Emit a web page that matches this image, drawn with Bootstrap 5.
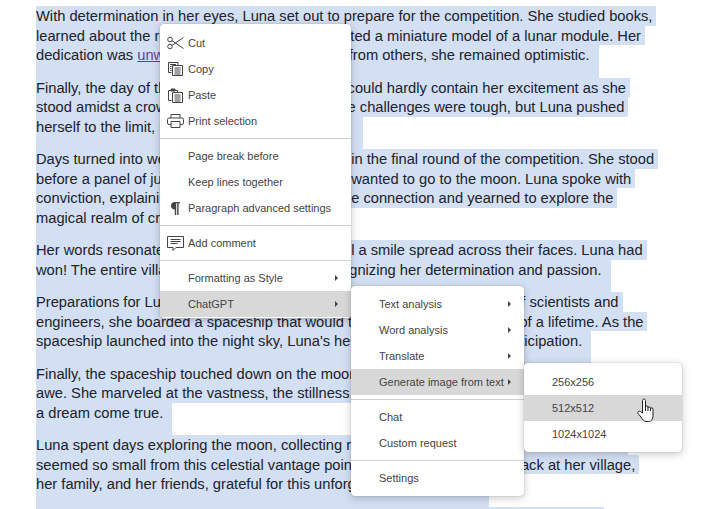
<!DOCTYPE html>
<html lang="en">
<head>
    <meta charset="UTF-8">
    <meta name="viewport" content="width=device-width, initial-scale=1.0">
    <title>Luna story</title>
    <link href="https://cdn.jsdelivr.net/npm/bootstrap@5.3.3/dist/css/bootstrap.min.css" rel="stylesheet" crossorigin="anonymous">
    <style>
        html, body { height: 100%; overflow: hidden; background: #fff; }
        .doc-page { padding: 6px 0 0 36px; font-family: "Liberation Sans", Arial, sans-serif; font-size: 14.7px; line-height: 17.5px; color: #20222c; }
        .doc-para { margin: 0; }
        .sel-line { display: block; width: fit-content; white-space: nowrap; padding: 2px 4px 0 0; background: #d3dff3; }
        .sel-line.para-end { padding-right: 9px; padding-bottom: 13px; }
        .sel-tail { width: 568px; height: 20px; padding: 0; }
        .doc-link { color: #6d3f8c; text-decoration: underline; }

        .ctx-menu { font-family: "Liberation Sans", Arial, sans-serif; font-size: 11px; color: #444; background: #fff; border: 0; border-radius: 4px; min-width: 0; margin: 0; padding: 5px 0; box-shadow: 0 0 1px rgba(0, 0, 0, .45), 0 2px 9px rgba(0, 0, 0, .22); overflow: hidden; }
        .menu-main { top: 24px; left: 160px; width: 191px; padding: 6px 0 1px; z-index: 10; }
        .menu-chat { top: 286px; left: 351px; width: 173px; z-index: 11; }
        .menu-size { top: 363px; left: 524px; width: 158px; padding: 6px 0 5px; z-index: 12; }
        .ctx-row { height: 26px; padding: 0; color: #444; }
        .ctx-row.row-hot { background: #d8d8d8; color: #444; }
        .ctx-slot { flex: 0 0 28px; display: flex; align-items: center; justify-content: center; padding-left: 2px; }
        .ctx-arrow { margin-left: auto; margin-right: 13px; border-left: 3px solid #444; border-top: 3px solid transparent; border-bottom: 3px solid transparent; }
        .ctx-menu .dropdown-divider { margin: 4px 0; border-top: 1px solid #d0d0d0; opacity: 1; }
        .ico { fill: none; stroke: #444; stroke-width: 1; display: block; }
        .ico-solid { fill: #444; display: block; }
        .hand-cursor { position: absolute; left: 637px; top: 398px; z-index: 20; }
    </style>
</head>
<body>
<div class="doc-page">
    <p class="doc-para">
        <span class="sel-line">With determination in her eyes, Luna set out to prepare for the competition. She studied books,</span>
        <span class="sel-line">learned about the rocket tech and even constructed a miniature model of a lunar module. Her</span>
        <span class="sel-line para-end">dedication was <span class="doc-link">unwavering</span>, and despite doubts from others, she remained optimistic.</span>
    </p>
    <p class="doc-para">
        <span class="sel-line">Finally, the day of the competition arrived. Luna could hardly contain her excitement as she</span>
        <span class="sel-line">stood amidst a crowd of hopeful contestants. The challenges were tough, but Luna pushed</span>
        <span class="sel-line para-end">herself to the limit, never once losing her dream.&nbsp;</span>
    </p>
    <p class="doc-para">
        <span class="sel-line">Days turned into weeks, and Luna found herself in the final round of the competition. She stood</span>
        <span class="sel-line">before a panel of judges and explained why she wanted to go to the moon. Luna spoke with</span>
        <span class="sel-line">conviction, explaining how she felt a deep, unique connection and yearned to explore the</span>
        <span class="sel-line para-end">magical realm of craters and stars.</span>
    </p>
    <p class="doc-para">
        <span class="sel-line">Her words resonated with the judges, and overall a smile spread across their faces. Luna had</span>
        <span class="sel-line para-end">won! The entire village erupted into cheers, recognizing her determination and passion.</span>
    </p>
    <p class="doc-para">
        <span class="sel-line">Preparations for Luna's journey up to the moon began soon. With a team of scientists and</span>
        <span class="sel-line">engineers, she boarded a spaceship that would take her on the adventure of a lifetime. As the</span>
        <span class="sel-line para-end">spaceship launched into the night sky, Luna's heart was racing with raw anticipation.</span>
    </p>
    <p class="doc-para">
        <span class="sel-line">Finally, the spaceship touched down on the moon's dusty surface. Luna stepped out in</span>
        <span class="sel-line">awe. She marveled at the vastness, the stillness, and the beauty of it all. It was truly</span>
        <span class="sel-line para-end">a dream come true.</span>
    </p>
    <p class="doc-para">
        <span class="sel-line">Luna spent days exploring the moon, collecting rocks and samples as she went. The Earth</span>
        <span class="sel-line">seemed so small from this celestial vantage point and she always looked back at her village,</span>
        <span class="sel-line para-end">her family, and her friends, grateful for this unforgettable experience.</span>
    </p>
    <p class="doc-para">
        <span class="sel-line sel-tail"></span>
    </p>
</div>

<!-- Main context menu -->
<div class="dropdown-menu show ctx-menu menu-main">
    <div class="dropdown-item ctx-row d-flex align-items-center">
        <span class="ctx-slot">
            <svg class="ico" width="17" height="14" viewBox="0 0 17 14"><circle cx="3" cy="3.5" r="2.3"/><circle cx="3" cy="10.5" r="2.3"/><path d="M5 4.6 16.5 12.5M5 9.4 16.5 1.5"/></svg>
        </span>Cut
    </div>
    <div class="dropdown-item ctx-row d-flex align-items-center">
        <span class="ctx-slot">
            <svg class="ico" width="15" height="14" viewBox="0 0 15 14"><path d="M3.5 10.5H.5V.5H10V3.5"/><path d="M2 2.5H8M2 4.5H3.5M2 6.5H3.5M2 8.5H3.5"/><path d="M4.5 3.5H14.5V13.5H4.5Z"/><path d="M6.5 6H12.5M6.5 8H12.5M6.5 10H12.5M6.5 12H12.5"/></svg>
        </span>Copy
    </div>
    <div class="dropdown-item ctx-row d-flex align-items-center">
        <span class="ctx-slot">
            <svg class="ico" width="15" height="15" viewBox="0 0 15 15"><path d="M3.5 12.5H.5V2.5H9.5V4.5"/><path d="M3 1H7V3H3Z" fill="#444"/><path d="M4.5 4.5H14.5V14.5H4.5Z"/><path d="M6.5 7H12.5M6.5 9H12.5M6.5 11H12.5M6.5 13H12.5"/></svg>
        </span>Paste
    </div>
    <div class="dropdown-item ctx-row d-flex align-items-center">
        <span class="ctx-slot">
            <svg class="ico" width="17" height="14" viewBox="0 0 17 14"><path d="M4 4V.5H13V4"/><path d="M4 10.5H2A1.5 1.5 0 0 1 .5 9V5.5A1.5 1.5 0 0 1 2 4H15A1.5 1.5 0 0 1 16.5 5.5V9A1.5 1.5 0 0 1 15 10.5H13"/><path d="M4 7.5H13V13.5H4Z"/></svg>
        </span>Print selection
    </div>
    <hr class="dropdown-divider">
    <div class="dropdown-item ctx-row d-flex align-items-center"><span class="ctx-slot"></span>Page break before</div>
    <div class="dropdown-item ctx-row d-flex align-items-center"><span class="ctx-slot"></span>Keep lines together</div>
    <div class="dropdown-item ctx-row d-flex align-items-center">
        <span class="ctx-slot">
            <svg class="ico-solid" width="9" height="13" viewBox="0 0 9 13"><path d="M3.8 0H9V1.2H7.6V13H6.2V1.2H5.2V13H3.8V7.4C1.5 7.4 0 5.8 0 3.7S1.5 0 3.8 0Z"/></svg>
        </span>Paragraph advanced settings
    </div>
    <hr class="dropdown-divider">
    <div class="dropdown-item ctx-row d-flex align-items-center">
        <span class="ctx-slot">
            <svg class="ico" width="17" height="15" viewBox="0 0 17 15"><path d="M.5.5H16.5V11.5H9L6 14.5V11.5H.5Z"/><path d="M3.5 3.5H13.5M3.5 5.5H13.5M3.5 7.5H10.5"/></svg>
        </span>Add comment
    </div>
    <hr class="dropdown-divider">
    <div class="dropdown-item ctx-row d-flex align-items-center"><span class="ctx-slot"></span>Formatting as Style<span class="ctx-arrow"></span></div>
    <div class="dropdown-item ctx-row row-hot d-flex align-items-center"><span class="ctx-slot"></span>ChatGPT<span class="ctx-arrow"></span></div>
</div>

<!-- ChatGPT submenu -->
<div class="dropdown-menu show ctx-menu menu-chat">
    <div class="dropdown-item ctx-row d-flex align-items-center"><span class="ctx-slot"></span>Text analysis<span class="ctx-arrow"></span></div>
    <div class="dropdown-item ctx-row d-flex align-items-center"><span class="ctx-slot"></span>Word analysis<span class="ctx-arrow"></span></div>
    <div class="dropdown-item ctx-row d-flex align-items-center"><span class="ctx-slot"></span>Translate<span class="ctx-arrow"></span></div>
    <div class="dropdown-item ctx-row row-hot d-flex align-items-center"><span class="ctx-slot"></span>Generate image from text<span class="ctx-arrow"></span></div>
    <hr class="dropdown-divider">
    <div class="dropdown-item ctx-row d-flex align-items-center"><span class="ctx-slot"></span>Chat</div>
    <div class="dropdown-item ctx-row d-flex align-items-center"><span class="ctx-slot"></span>Custom request</div>
    <hr class="dropdown-divider">
    <div class="dropdown-item ctx-row d-flex align-items-center"><span class="ctx-slot"></span>Settings</div>
</div>

<!-- Image size submenu -->
<div class="dropdown-menu show ctx-menu menu-size">
    <div class="dropdown-item ctx-row d-flex align-items-center"><span class="ctx-slot"></span>256x256</div>
    <div class="dropdown-item ctx-row row-hot d-flex align-items-center"><span class="ctx-slot"></span>512x512</div>
    <div class="dropdown-item ctx-row d-flex align-items-center"><span class="ctx-slot"></span>1024x1024</div>
</div>

<svg class="hand-cursor" width="18" height="25" viewBox="0 0 18 25"><path fill="#fff" stroke="#222" stroke-width="1" d="M5.5 15V2.5C5.5.5 8.5.5 8.5 2.5V9C8.5 7.5 11 7.5 11 9V10C11 8.5 13.5 8.5 13.5 10V11C13.5 9.5 16 9.5 16 11V18C16 21 14.5 23.5 11.5 23.5H9C6.5 23.5 5.5 21 4 19L1 15.5C0 14 2 12.5 3.5 13.5Z"/><path fill="none" stroke="#222" stroke-width="1" d="M8.5 9V13M11 10V13M13.5 11V13"/></svg>

<script src="https://cdn.jsdelivr.net/npm/bootstrap@5.3.3/dist/js/bootstrap.bundle.min.js" crossorigin="anonymous"></script>
</body>
</html>
